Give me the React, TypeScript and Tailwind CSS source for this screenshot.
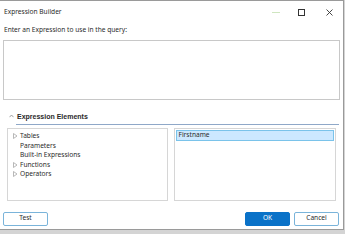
import React from 'react';

const font = { fontFamily: '"Noto Sans", "Liberation Sans", sans-serif' };

function Caret() {
  return (
    <svg width="5" height="6" viewBox="0 0 5 6" className="shrink-0">
      <path d="M0.5 0.5 L4 3 L0.5 5.5 Z" fill="none" stroke="#a6a6a6" strokeWidth="0.8" />
    </svg>
  );
}

function TreeItem({ label, expandable }: { label: string; expandable?: boolean }) {
  return (
    <div className="flex items-center h-[9.5px] gap-[2px] pl-[5px]">
      <span className="w-[5px] flex">{expandable && <Caret />}</span>
      <span className="leading-none">{label}</span>
    </div>
  );
}

export default function App() {
  return (
    <div className="w-[345px] h-[234px] bg-[#d4d4d4] overflow-hidden" style={font}>
      <div className="w-[344px] h-[230px] bg-white border-t border-r border-b border-[#9a9a9a] flex flex-col text-[6.6px] text-[#2a2a2a]">
        {/* title bar */}
        <div className="h-[22px] flex items-center pl-[4px]">
          <span className="flex-1">Expression Builder</span>
          <span className="w-[8px] h-px bg-[#cfe6c0] mr-[18px]" />
          <span className="w-[7px] h-[7px] border border-[#333] mr-[21px]" />
          <svg width="7" height="7" viewBox="0 0 7 7" className="mr-[10px]">
            <path d="M0.5 0.5 L6.5 6.5 M6.5 0.5 L0.5 6.5" stroke="#333" strokeWidth="0.9" />
          </svg>
        </div>

        <div className="pl-[4px] mt-[4px] leading-none">Enter an Expression to use in the query:</div>

        <div className="mx-[3px] mt-[6px] h-[60px] border border-[#c8c8c8] bg-white" />

        {/* section header */}
        <div className="flex items-center mt-[13px] pl-[9px] gap-[3px]">
          <svg width="5" height="4" viewBox="0 0 5 4">
            <path d="M0.5 3.2 L2.5 1 L4.5 3.2" fill="none" stroke="#8a8a8a" strokeWidth="0.8" />
          </svg>
          <span className="font-bold leading-none text-[7px]" style={{ fontFamily: '"Liberation Sans", Arial, sans-serif' }}>
            Expression Elements
          </span>
        </div>
        <div className="ml-[16px] mr-[4px] mt-[4px] h-px bg-[#8fa8c8]" />

        <div className="flex gap-[6px] mx-[7px] mt-[3px] h-[73px]">
          <div className="flex-1 border border-[#d6d6d6] pt-[3px]">
            <TreeItem label="Tables" expandable />
            <TreeItem label="Parameters" />
            <TreeItem label="Built-in Expressions" />
            <TreeItem label="Functions" expandable />
            <TreeItem label="Operators" expandable />
          </div>
          <div className="flex-1 border border-[#d6d6d6] p-px">
            <div className="h-[11px] bg-[#cce8ff] border border-[#7ac3ea] flex items-center pl-[2px] leading-none">
              Firstname
            </div>
          </div>
        </div>

        <div className="flex items-center mt-[11px] px-[3px]">
          <button className="w-[45px] h-[14px] border border-[#7ab4da] rounded-[2px] bg-white text-[6.6px] leading-none">
            Test
          </button>
          <div className="flex-1" />
          <button className="w-[45px] h-[14px] bg-[#0a72c8] border border-[#0a72c8] rounded-[2px] text-white text-[6.6px] leading-none">
            OK
          </button>
          <button className="ml-[4px] mr-px w-[45px] h-[14px] border border-[#7ab4da] rounded-[2px] bg-white text-[6.6px] leading-none">
            Cancel
          </button>
        </div>
      </div>
    </div>
  );
}
